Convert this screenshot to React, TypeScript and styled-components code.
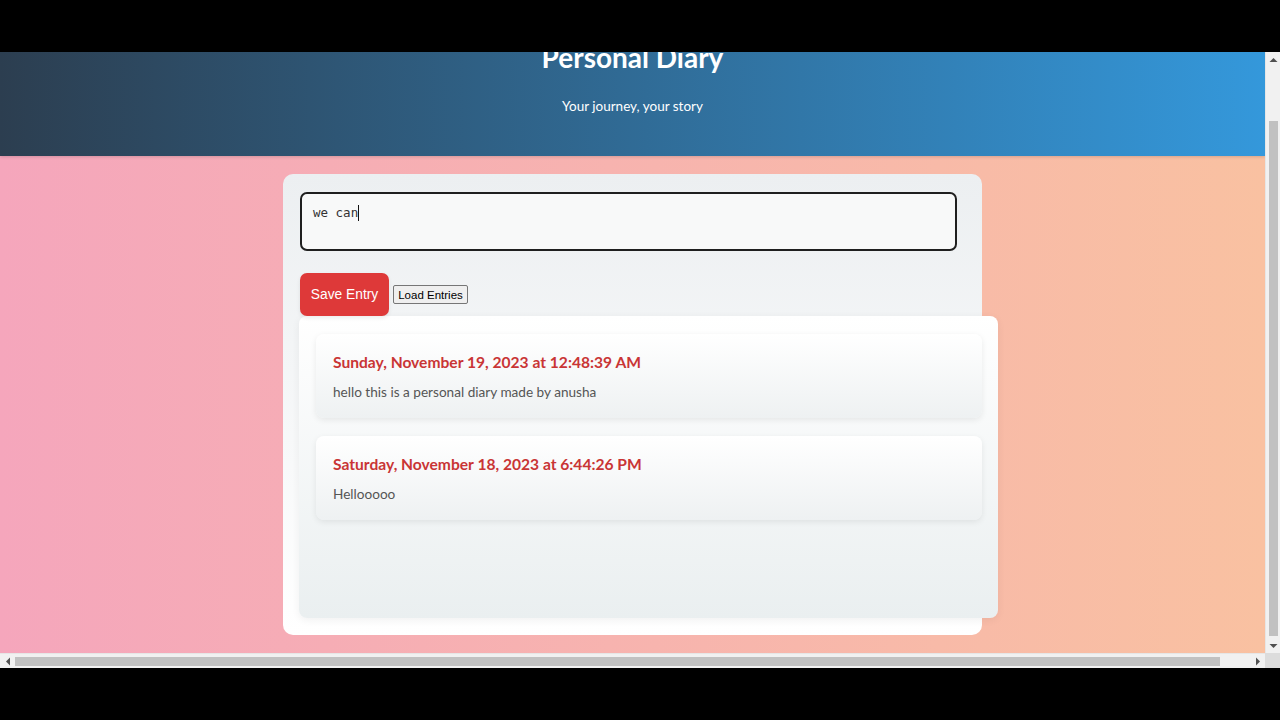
import React from "react"
import styled, { createGlobalStyle } from "styled-components"

//#region Css
const GlobalStyle = createGlobalStyle`
    html, body {
        margin: 0;
        padding: 0;
        background: #000;
        overflow: hidden;
    }
`

const Frame = styled.div`
    width: 1280px;
    height: 720px;
    background: #000;
    display: flex;
    flex-direction: column;
    justify-content: center;
`

const Screen = styled.div`
    height: 616px;
    display: grid;
    grid-template-columns: 1fr 15px;
    grid-template-rows: 1fr 15px;
    background: #f1f1f1;
`

const Viewport = styled.div`
    overflow: hidden;
    background: linear-gradient(to right, #f5a6bc, #f9c1a1);
`

// the page is scrolled down a little, so the top of the header is out of view
const Page = styled.div`
    margin-top: -33px;
    font-family: Lato, "Open Sans", sans-serif;
`

const Header = styled.header`
    background: linear-gradient(to right, #2c3e50, #3498db);
    color: #fff;
    text-align: center;
    padding: 20px 0 40px;
    box-shadow: 0 1px 3px rgba(0, 0, 0, 0.15);
`

const Title = styled.h1`
    font-size: 28px;
    line-height: 36px;
    font-weight: 700;
    margin: 0 0 21px;
`

const Tagline = styled.p`
    font-size: 13.5px;
    line-height: 20px;
    margin: 0;
`

const Main = styled.main`
    padding-top: 18px;
    display: flex;
    justify-content: center;
`

const Card = styled.section`
    width: 699px;
    box-sizing: border-box;
    padding: 18px 16px 17px;
    border-radius: 10px;
    background: linear-gradient(to bottom, #eceff1, #ffffff);
`

const Editor = styled.div`
    width: 657px;
    height: 59px;
    margin-left: 1px;
    box-sizing: border-box;
    border: 2px solid #1f1f1f;
    border-radius: 7px;
    background: #f8f9f9;
    padding: 10px 11px;
    font-family: "DejaVu Sans Mono", "Liberation Mono", monospace;
    font-size: 12.5px;
    line-height: 18px;
    color: #333;
`

const Caret = styled.span`
    display: inline-block;
    width: 1px;
    height: 16px;
    background: #111;
    vertical-align: -4px;
`

const Actions = styled.div`
    margin-top: 22px;
    margin-left: 1px;
    display: flex;
    align-items: center;
    gap: 4px;
`

const SaveButton = styled.button`
    height: 43px;
    width: 89px;
    border: none;
    border-radius: 7px;
    background: #de3939;
    color: #fff;
    font-family: "Liberation Sans", Arial, sans-serif;
    font-size: 13.8px;
    padding: 0;
    box-shadow: 0 2px 4px rgba(0, 0, 0, 0.08);
`

const LoadButton = styled.button`
    height: 19px;
    width: 75px;
    padding: 0;
    border: 1px solid #767676;
    border-radius: 2px;
    background: #efefef;
    color: #000;
    font-family: "Liberation Sans", Arial, sans-serif;
    font-size: 11.5px;
`

const EntriesPanel = styled.div`
    width: 699px;
    height: 302px;
    box-sizing: border-box;
    padding: 18px 16px 18px 17px;
    border-radius: 8px;
    background: linear-gradient(to bottom, #ffffff, #eaeff0);
    box-shadow: 0 2px 8px rgba(0, 0, 0, 0.06);
    display: flex;
    flex-direction: column;
    gap: 18px;
`

const Entry = styled.article`
    padding: 16px 17px;
    border-radius: 8px;
    background: linear-gradient(to bottom, #ffffff, #eef1f2);
    box-shadow: 0 2px 6px rgba(0, 0, 0, 0.08);
`

const EntryDate = styled.h3`
    margin: 0 0 8px;
    font-size: 15.6px;
    line-height: 24px;
    font-weight: 700;
    color: #c93535;
`

const EntryText = styled.p`
    margin: 0;
    font-size: 13.6px;
    line-height: 20px;
    color: #555;
`

const VTrack = styled.div`
    background: #f1f1f1;
    display: flex;
    flex-direction: column;
    align-items: center;
    border-left: 1px solid #e6e6e6;
`

const HTrack = styled.div`
    background: #f1f1f1;
    display: flex;
    align-items: center;
    border-top: 1px solid #e6e6e6;
`

const Corner = styled.div`
    background: #dcdcdc;
`

const Arrow = styled.div`
    width: 15px;
    height: 15px;
    display: flex;
    align-items: center;
    justify-content: center;
    flex: none;
`

const VThumb = styled.div`
    width: 9px;
    margin: 54px 0 2px;
    flex: 1;
    background: #c1c1c1;
`

const HThumb = styled.div`
    height: 9px;
    margin: 0 30px 0 0;
    flex: 1;
    background: #c1c1c1;
`
//#endregion

const entries = [
    { date: "Sunday, November 19, 2023 at 12:48:39 AM", text: "hello this is a personal diary made by anusha" },
    { date: "Saturday, November 18, 2023 at 6:44:26 PM", text: "Hellooooo" },
]

const Tri = ({ dir }: { dir: "up" | "down" | "left" | "right" }) => {
    const pts = {
        up: "3.5,6 7.5,2 11.5,6",
        down: "3.5,2 7.5,6 11.5,2",
        left: "6,3.5 2,7.5 6,11.5",
        right: "2,3.5 6,7.5 2,11.5",
    }[dir]
    const size = dir === "up" || dir === "down" ? { w: 15, h: 8 } : { w: 8, h: 15 }
    return (
        <svg width={size.w} height={size.h} viewBox={`0 0 ${size.w} ${size.h}`}>
            <polygon points={pts} fill="#505050" />
        </svg>
    )
}

const App = () => {
    return (
        <Frame>
            <GlobalStyle />
            <Screen>
                <Viewport>
                    <Page>
                        <Header>
                            <Title>Personal Diary</Title>
                            <Tagline>Your journey, your story</Tagline>
                        </Header>
                        <Main>
                            <Card>
                                <Editor role="textbox">
                                    we can<Caret />
                                </Editor>
                                <Actions>
                                    <SaveButton>Save Entry</SaveButton>
                                    <LoadButton>Load Entries</LoadButton>
                                </Actions>
                                <EntriesPanel>
                                    {entries.map(e => (
                                        <Entry key={e.date}>
                                            <EntryDate>{e.date}</EntryDate>
                                            <EntryText>{e.text}</EntryText>
                                        </Entry>
                                    ))}
                                </EntriesPanel>
                            </Card>
                        </Main>
                    </Page>
                </Viewport>
                <VTrack>
                    <Arrow><Tri dir="up" /></Arrow>
                    <VThumb />
                    <Arrow><Tri dir="down" /></Arrow>
                </VTrack>
                <HTrack>
                    <Arrow><Tri dir="left" /></Arrow>
                    <HThumb />
                    <Arrow><Tri dir="right" /></Arrow>
                </HTrack>
                <Corner />
            </Screen>
        </Frame>
    )
}

export default App
